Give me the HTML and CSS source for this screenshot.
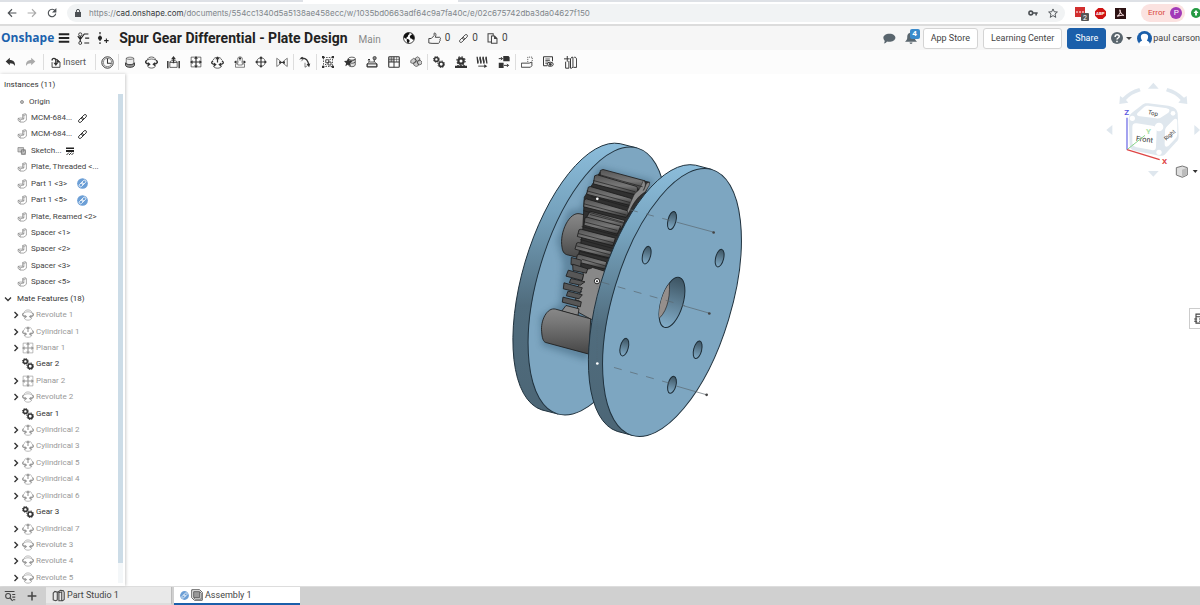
FILE: index.html
```html
<!DOCTYPE html>
<html lang="en">
<head>
<meta charset="utf-8">
<title>Spur Gear Differential - Plate Design</title>
<link rel="stylesheet" href="styles.css">
</head>
<body>
<svg class="defs" aria-hidden="true">
  <symbol id="part" viewBox="0 0 16 16"><path d="M9 2.500l4-1.500 2 1.500v9l-4 3H5l-3.500-3 .5-3 4-.5 3 .5zM9 2.500l2 1.500v5.500L9 8.500M11 4l3.500-1.500M1.500 8.500L5 11l6-1.500M5 11v3.500"/></symbol>
  <symbol id="sketch" viewBox="0 0 16 16"><path fill="#ccc" d="M1.500 2.500h9v7h-9zM7 6h6.500v7.500H7z"/><circle cx="10" cy="9.500" r="3.500" fill="none"/></symbol>
  <symbol id="link" viewBox="0 0 16 16"><g transform="rotate(-45 8 8)" stroke-width="1.500"><rect x="-1" y="5.500" width="10.500" height="5" rx="2.500"/><rect x="6.500" y="5.500" width="10.500" height="5" rx="2.500"/></g></symbol>
  <symbol id="bluelink" viewBox="0 0 16 16"><circle cx="8" cy="8" r="7.800" fill="#6c9fd6" stroke="none"/><g transform="rotate(-45 8 8)" stroke="#fff" stroke-width="1.200"><rect x="2" y="6" width="7" height="4" rx="2"/><rect x="7" y="6" width="7" height="4" rx="2"/></g></symbol>
  <symbol id="fixed" viewBox="0 0 16 16"><path fill="#222" stroke="none" d="M0 1h16v3H0zM0 6h16v4H0z"/><path stroke="#333" stroke-width="2" d="M1 16l5-5M6 16l5-5M11 16l5-5"/></symbol>
  <symbol id="revolute" viewBox="0 0 16 16"><path stroke-width=".9" d="M3 5c0-5 10-5 10 0M3 5c2.500-1.700 7.500-1.700 10 0M3 11.500c0 4.500 10 4.500 10 0"/><path stroke-width="1.700" d="M2.500 5.500C-.5 7 .5 9.500 5 10M13.500 5.500c3 1.500 2 4-2.500 4.500"/><path fill="currentColor" stroke="none" d="M3.500 7.500L7 10l-3.500 3zM12.500 7.500L9 10l3.500 3z"/></symbol>
  <symbol id="cyl" viewBox="0 0 16 16"><path stroke-width=".9" d="M3 5c0-4.500 10-4.500 10 0M3 12c0 4 10 4 10 0"/><path stroke-width="1.500" d="M8 2v6M2.500 6C-.5 8 .5 10 5 10.500M13.500 6c3 2 2 4-2.500 4.500"/><path fill="currentColor" stroke="none" d="M8 .5l2.600 3.500H5.400zM3.500 8L7 10.500 3.500 13.500zM12.500 8L9 10.500l3.500 3z"/></symbol>
  <symbol id="planar" viewBox="0 0 16 16"><path stroke-width=".9" d="M1.500 1.500h13v13h-13z"/><path stroke-width="1.600" d="M8 2v12M2 8h12"/><path fill="currentColor" stroke="none" d="M8 0l2.500 3.500h-5zM8 16l2.500-3.500h-5zM0 8l3.500-2.500v5zM16 8l-3.500-2.500v5z"/></symbol>
  <symbol id="ball" viewBox="0 0 16 16"><circle cx="8" cy="8" r="5.800" stroke-width=".8"/><path stroke-width="1.500" d="M8 2v12M2 8h12"/><path fill="currentColor" stroke="none" d="M8 0l2.300 3.500H5.700zM8 16l2.300-3.500H5.700zM0 8l3.500-2.300v4.600zM16 8l-3.500-2.300v4.600z"/></symbol>
  <symbol id="gears" viewBox="0 0 16 16"><circle cx="4.500" cy="4.500" r="2.600" stroke-width="2"/><circle cx="4.500" cy="4.500" r="4" stroke-width="1.300" stroke-dasharray="1.500 1.640"/><circle cx="11" cy="11" r="3" stroke-width="2.200"/><circle cx="11" cy="11" r="4.500" stroke-width="1.300" stroke-dasharray="1.700 1.830"/></symbol>
  <symbol id="chev" viewBox="0 0 8 8"><path stroke-width="1.400" d="M2.500 1L5.500 4l-3 3"/></symbol>
  <symbol id="down" viewBox="0 0 8 8"><path stroke-width="1.300" d="M1 2.500l3 3 3-3"/></symbol>
  <symbol id="undo" viewBox="0 0 16 16"><path fill="currentColor" stroke="none" d="M7 1v3.500c5 0 8 3 7.500 8.500-1.500-3-4-4-7.500-4V12L1 6.500z"/></symbol>
  <symbol id="redo" viewBox="0 0 16 16"><path fill="currentColor" stroke="none" d="M9 1v3.500c-5 0-8 3-7.500 8.500C3 10 5.500 9 9 9v3l6-5.500z"/></symbol>
  <symbol id="insert" viewBox="0 0 16 16"><path stroke-width="1.300" d="M7 3.500h3.500l4 4V15H3V7.500"/><path fill="currentColor" stroke="none" d="M5 8.500h7L8.500 13zM10 3l5 5h-5z"/><path stroke-width="2" d="M3 5c0-4 5.500-4 5.500 0v4"/></symbol>
  <symbol id="clock" viewBox="0 0 16 16"><circle cx="8" cy="8" r="7" stroke-width="1.200"/><circle cx="8" cy="8" r="5" stroke-width=".7"/><path stroke-width="1.300" d="M8 3v6h4.500"/></symbol>
  <symbol id="fasten" viewBox="0 0 16 16"><path fill="#eee" stroke-width=".8" d="M3 3v7c1 2 9 2 10 0V3c-1-2-9-2-10 0zM3 3c1 2 9 2 10 0"/><path fill="#999" stroke-width="1.200" d="M2 9v3.500c1 3.500 11 3.500 12 0V9c-1 3.500-11 3.500-12 0z"/></symbol>
  <symbol id="slider" viewBox="0 0 16 16"><path stroke-width=".9" d="M3.500 14V7l3-1.500h3l3 1.500v7zM3.500 8h9"/><path stroke-width="1.800" d="M1 6v9M15 6v9M8 3v6"/><path fill="currentColor" stroke="none" d="M8 0l3 4H5z"/></symbol>
  <symbol id="pin" viewBox="0 0 16 16"><path stroke-width=".8" d="M5 7V3c0-2.500 6-2.500 6 0v4M5 10l-3 1v4h12v-4l-3-1M5 10v2h6v-2"/><path stroke-width="1.300" d="M2 8h4M14 8h-4M8 3v3"/><path fill="currentColor" stroke="none" d="M0 8l3-2.500v5zM16 8l-3-2.500v5zM8 1l2 3H6z"/></symbol>
  <symbol id="parallel" viewBox="0 0 16 16"><path stroke-width=".8" d="M1 14V3l4 3v5zM15 14V3l-4 3v5z"/><path stroke-width="1.300" d="M4 8.500h8"/><path fill="currentColor" stroke="none" d="M8 8.500L5 6v5zM8 8.500L11 6v5z"/></symbol>
  <symbol id="tangent" viewBox="0 0 16 16"><path stroke-width=".8" d="M1 5l3-3M3 7l3-3M8 9v6l3-2"/><path stroke-width="1.700" d="M3 3c6-1 9 3 10 9"/><path fill="currentColor" stroke="none" d="M1 3l4-2v4zM10 11l5-1-1.500 5z"/></symbol>
  <symbol id="group" viewBox="0 0 16 16"><path stroke-width="1.100" stroke-dasharray="2 1.500" d="M2 2h12v12H2z"/><path stroke-width="1.200" d="M5 5h4v4H5zM8 8h4v4H8zM10 5l2-1M4 11l2 1"/><path fill="currentColor" stroke="none" d="M0 0h3v3H0zM13 0h3v3h-3zM0 13h3v3H0zM13 13h3v3h-3z"/></symbol>
  <symbol id="star" viewBox="0 0 16 16"><ellipse cx="10.500" cy="3.500" rx="4.500" ry="2"/><path fill="#ddd" d="M6 4v8c1 3 8 3 9 0V4c-1 3-8 3-9 0z"/><path d="M8 9c2 1 5 1 7-1"/><path fill="currentColor" stroke="none" d="M5.500 2.500l1.700 3.900 4.200.3-3.200 2.800 1 4.100-3.700-2.200L1.800 13.600l1-4.100L0 6.700l3.800-.3z"/></symbol>
  <symbol id="mate" viewBox="0 0 16 16"><path d="M1.500 14.500v-4l3-2.500h7l3 2.500v4z" fill="#eee"/><path stroke-width="1.300" d="M1.500 10.500h13v4h-13zM4 8V4M2.500 5.500L4 4l1.500 1.500M11 8V3"/><circle cx="11.500" cy="2.800" r="2.200" fill="#888"/></symbol>
  <symbol id="grid" viewBox="0 0 16 16"><path fill="#bbb" stroke="none" d="M2 2h6v6H2z"/><rect x="1" y="1" width="14" height="14" rx="1" stroke-width="1.500"/><path stroke-width="1.300" d="M8 1v14M1 8h14"/><path stroke-width=".7" d="M4.500 1v7M1 4.500h14M11.500 1v7"/></symbol>
  <symbol id="cluster" viewBox="0 0 16 16"><path stroke-width=".8" fill="#ccc" d="M1 6l4-3 3 2v3L4 10 1 9zM7 3l3-2 3 2v3l-3 1-3-2zM5 9l3-2 3 3v3l-3 1-3-2zM10 7l3-2 3 3-1 3-3 1-2-2z"/></symbol>
  <symbol id="rack" viewBox="0 0 16 16"><circle cx="8" cy="6.500" r="3.500" stroke-width="3"/><circle cx="8" cy="6.500" r="5.500" stroke-width="1.600" stroke-dasharray="2 2.320"/><path fill="currentColor" stroke="none" d="M0 16v-3h3v-1h2v1h2v-1h2v1h2v-1h2v1h3v3z"/></symbol>
  <symbol id="screw" viewBox="0 0 16 16"><path stroke-width="1.700" d="M1.500 1l1 9M5.500 1l1 9M9.500 1l1 9M13.500 1l1 9"/><path stroke-width=".8" d="M2.500 10l3-9M6.500 10l3-9M10.500 10l3-9"/><path stroke-width="1.200" d="M3 13.500h9"/><path fill="currentColor" stroke="none" d="M11 11l4 2.500-4 2.500z"/></symbol>
  <symbol id="linear" viewBox="0 0 16 16"><path fill="currentColor" stroke="none" d="M7 0h7l1.500 1.500V7H7zM1 9h6.500v7H1z"/><path stroke-width="1.300" d="M1 3.500h5M8 12.500h6M4 1.500l2 2-2 2M12 10.500l2 2-2 2"/></symbol>
  <symbol id="measure" viewBox="0 0 16 16"><path stroke-width="1" stroke-dasharray="1.500 1.200" d="M9 8V1.500h6V8"/><path stroke-width="1.200" d="M.5 9.500H11l3.500-1.500v5l-2 2H.5z"/></symbol>
  <symbol id="bom" viewBox="0 0 16 16"><path stroke-width="1.300" d="M7 13H2V1h12v6"/><path stroke-width="1" d="M4.500 4h6M4.500 6h6M4.500 8h4M4.500 10h2"/><ellipse cx="11" cy="11" rx="4" ry="2.800" stroke-width="1.300"/><circle cx="11" cy="11" r="1.500" fill="currentColor"/></symbol>
  <symbol id="explode" viewBox="0 0 16 16"><path stroke-width="1.200" d="M2 7v8h4V6M8 3.500l1.500-2h1.500v12L9.500 15H8zM12.500 1.500H14l1.500 2V14h-4M4 0v7M0 3.500h7"/></symbol>
  <symbol id="tree" viewBox="0 0 16 16"><circle cx="4" cy="3" r="2"/><circle cx="4" cy="13.500" r="1.800"/><path stroke-width="1.400" d="M4 5v7M4.500 8.500L9 2.500h5M10 7.500h5M9 13.500h6M1 5l3 4"/></symbol>
  <symbol id="version" viewBox="0 0 16 16"><path stroke-width="1.600" stroke-dasharray="3 1.500" d="M4 0v16"/><circle cx="4" cy="8" r="2.800" fill="currentColor" stroke="none"/><path stroke-width="1.400" d="M12.500 8.500v6M9.500 11.500h6"/></symbol>
  <symbol id="globe" viewBox="0 0 16 16"><circle cx="8" cy="8" r="7.300" fill="#fff" stroke-width="1"/><path fill="currentColor" stroke="none" d="M1.500 4C3 1.500 5.500.8 8 1l1 1.500L7 4 6.500 6 4.500 7.500 5 9 3 8.500 1 7zM10.500 1.500c3 1 5 4 4.500 7.500l-1.500 2L12 9l-2-.5L9 6l1.500-2L12 4zM5 9l3 1 1 2-2 3-1.500-1L5 11.500z"/></symbol>
  <symbol id="thumb" viewBox="0 0 16 16"><path stroke-width="1.200" d="M1 8h3l3.500-3.500V1.500c2-1 3 1.500 1.500 5h5.500c1.500 1 1 2 .3 2.500.5 1.200.2 2-.6 2.500 0 1-.3 2-1.200 2.500H5L1 13.500z"/></symbol>
  <symbol id="docs" viewBox="0 0 16 16"><path stroke-width="1.500" d="M6 13H1.500V1H9v3M6.500 4.500h4.500L14.500 8v7h-8zM11 4.500V8h3.500"/></symbol>
  <symbol id="studio" viewBox="0 0 16 16"><path stroke-width="1.300" d="M1.500 5l2-2 3 1v9.500l-2 1-3-1zM8.500 3l2-1.500 3.500.5 1 2v9l-2 1.500H8.500zM8.500 4.500l3.500-1v11M6.500 4l2-1"/></symbol>
  <symbol id="assembly" viewBox="0 0 16 16"><path stroke-width="1.200" d="M1 1h10.500L15 4.500V15H4.500L1 11.500z"/><path fill="#999" stroke-width="1" d="M3.500 3.500h8v8h-8z"/><path d="M12 4l1.500 1.500v8H6L4 12"/></symbol>
  <symbol id="tabsearch" viewBox="0 0 16 16"><path stroke-width="1.400" d="M1 2h13M11 6h4M11 9.500h4M12 13h3"/><circle cx="5.500" cy="8" r="3.300" stroke-width="1.400"/><path stroke-width="1.600" d="M8 10.500l3.500 4"/></symbol>
</svg>

<div class="browser">
  <div class="strip"><span class="strip-left"></span><span class="strip-right"></span></div>
  <div class="navbar">
    <button class="nav" aria-label="Back"><svg class="i10" viewBox="0 0 16 16"><path stroke-width="1.800" d="M15 8H2M8 2L2 8l6 6"/></svg></button>
    <button class="nav faint" aria-label="Forward"><svg class="i10" viewBox="0 0 16 16"><path stroke-width="1.800" d="M1 8h13M8 2l6 6-6 6"/></svg></button>
    <button class="nav" aria-label="Reload"><svg class="i10" viewBox="0 0 16 16"><path stroke-width="1.800" d="M13 4.500A6 6 0 1 0 14 9"/><path fill="currentColor" stroke="none" d="M15 0v7H8z"/></svg></button>
    <div class="address">
      <svg class="i8" viewBox="0 0 16 16"><path fill="currentColor" stroke="none" d="M2 6h12v10H2z"/><path stroke-width="2" d="M4.800 6V4a3.200 3.200 0 0 1 6.400 0v2"/></svg>
      <a class="url" href="#">https://<b>cad.onshape.com</b>/documents/554cc1340d5a5138ae458ecc/w/1035bd0663adf64c9a7fa40c/e/02c675742dba3da04627f150</a>
      <svg class="i10 key" viewBox="0 0 16 16"><circle cx="4.500" cy="8" r="3" stroke-width="2.500"/><path stroke-width="2.500" d="M8 8h7.500M13 8v4"/></svg>
      <svg class="i10" viewBox="0 0 16 16"><path stroke-width="1.500" d="M8 1.500l2 4.500 5 .4-3.800 3.200L12.400 15 8 12.100 3.600 15l1.200-5.400L1 6.400 6 6z"/></svg>
    </div>
    <div class="exts">
      <svg class="ext-wide" viewBox="0 0 14 14"><path fill="#d22f2f" stroke="none" d="M0 0h10v10H0z"/><path stroke="#fff" stroke-width="1.200" stroke-dasharray="2 1" d="M1 5h8"/><rect x="6" y="6" width="8" height="8" rx="1" fill="#555" stroke="none"/><text class="ext-num" x="8" y="13">2</text></svg>
      <svg class="i11" viewBox="0 0 20 20"><path fill="#cf1212" stroke="none" d="M6 0h8l6 6v8l-6 6H6l-6-6V6z"/><text class="ext-abp" x="2" y="13">ABP</text></svg>
      <svg class="i11" viewBox="0 0 16 16"><path fill="#2c1213" stroke="none" d="M0 0h16v16H0z"/><path stroke="#f2d8d8" stroke-width="1.500" d="M3 12c4-2 6-8 4.500-9S7 8 13 11c-2-1-6 0-10 1z"/></svg>
      <span class="divider"></span>
      <button class="profile">Error <span class="initial">P</span></button>
      <svg class="i10" viewBox="0 0 16 16"><circle cx="8" cy="8" r="8" fill="#259a43" stroke="none"/><path fill="#fff" stroke="none" d="M8 3l4 5H9.500v4h-3V8H4z"/></svg>
    </div>
  </div>
</div>

<header class="header">
  <a class="logo" href="#">Onshape</a>
  <button aria-label="Menu"><svg class="i12" viewBox="0 0 16 16"><path stroke-width="2.400" d="M1 3h14M1 8h14M1 13h14"/></svg></button>
  <button aria-label="Versions"><svg class="i13"><use href="#tree"/></svg></button>
  <button aria-label="Create version"><svg class="i12"><use href="#version"/></svg></button>
  <h1>Spur Gear Differential - Plate Design</h1>
  <span class="branch">Main</span>
  <svg class="i12 globe"><use href="#globe"/></svg>
  <button class="count"><svg class="i13"><use href="#thumb"/></svg>0</button>
  <button class="count"><svg class="i9"><use href="#link"/></svg>0</button>
  <button class="count"><svg class="i11"><use href="#docs"/></svg>0</button>
  <div class="account">
    <button aria-label="Comments"><svg class="i13 slate" viewBox="0 0 16 16"><path fill="currentColor" stroke="none" d="M8 2c9 0 10 9 1 10-1 0-3 0-4-.4C4 13 2.500 14 1 14c1-1 1.200-2 1-3.300C-1.500 7 1 2 8 2z"/></svg></button>
    <button class="bell" aria-label="Notifications"><svg class="i12 slate" viewBox="0 0 16 16"><path fill="currentColor" stroke="none" d="M8 1c4 0 5 3 5 6s1 4 3 6H0c2-2 3-3 3-6s1-6 5-6zM6 14h4c0 2.500-4 2.500-4 0z"/></svg><span class="badge">4</span></button>
    <button class="btn">App Store</button>
    <button class="btn">Learning Center</button>
    <button class="btn primary">Share</button>
    <button class="help" aria-label="Help"><svg class="i12 slate" viewBox="0 0 16 16"><circle cx="8" cy="8" r="8" fill="currentColor" stroke="none"/><path stroke="#fff" stroke-width="2" d="M5.500 6.500c0-4 5.500-3.500 5.500-.5 0 2-3 2-3 4M8 11.500v2"/></svg><span class="caret"></span></button>
    <button class="user"><svg class="i15" viewBox="0 0 16 16"><circle cx="8" cy="8" r="8" fill="#1b5faa" stroke="none"/><path fill="#fff" stroke="none" d="M8 3c6 0 3.500 6 2.500 7.500 2 .7 3.500 1.500 3.500 5.500H2c0-4 1.500-4.800 3.500-5.500C4.500 9 2 3 8 3z"/></svg>paul carson</button>
  </div>
</header>

<div class="toolbar">
  <div class="group g-undo"><button aria-label="Undo"><svg class="i11"><use href="#undo"/></svg></button><button class="faint" aria-label="Redo"><svg class="i11"><use href="#redo"/></svg></button></div>
  <div class="group g-insert"><button class="insert"><svg class="i11"><use href="#insert"/></svg>Insert</button></div>
  <div class="group g-one"><button aria-label="History"><svg class="i13"><use href="#clock"/></svg></button></div>
  <div class="group g-mates">
    <button aria-label="Fastened"><svg class="i12"><use href="#fasten"/></svg></button><button aria-label="Revolute"><svg class="i13"><use href="#revolute"/></svg></button><button aria-label="Slider"><svg class="i13"><use href="#slider"/></svg></button><button aria-label="Planar"><svg class="i12"><use href="#planar"/></svg></button><button aria-label="Cylindrical"><svg class="i13"><use href="#cyl"/></svg></button><button aria-label="Pin slot"><svg class="i12"><use href="#pin"/></svg></button><button aria-label="Ball"><svg class="i12"><use href="#ball"/></svg></button><button aria-label="Parallel"><svg class="i12"><use href="#parallel"/></svg></button>
  </div>
  <div class="group g-one"><button aria-label="Tangent"><svg class="i12"><use href="#tangent"/></svg></button></div>
  <div class="group g-five">
    <button aria-label="Group"><svg class="i12"><use href="#group"/></svg></button><button aria-label="Favorites"><svg class="i12"><use href="#star"/></svg></button><button aria-label="Mate connector"><svg class="i12"><use href="#mate"/></svg></button><button aria-label="Pattern"><svg class="i12"><use href="#grid"/></svg></button><button aria-label="Replicate"><svg class="i12"><use href="#cluster"/></svg></button>
  </div>
  <div class="group g-four">
    <button aria-label="Gear"><svg class="i12"><use href="#gears"/></svg></button><button aria-label="Rack and pinion"><svg class="i12"><use href="#rack"/></svg></button><button aria-label="Screw"><svg class="i12"><use href="#screw"/></svg></button><button aria-label="Linear"><svg class="i12"><use href="#linear"/></svg></button>
  </div>
  <div class="group g-three">
    <button aria-label="Measure"><svg class="i12"><use href="#measure"/></svg></button><button aria-label="Bill of materials"><svg class="i12"><use href="#bom"/></svg></button><button aria-label="Exploded view"><svg class="i13"><use href="#explode"/></svg></button>
  </div>
</div>

<main class="work">
  <aside class="sidebar">
    <ul class="list">
      <li class="head">Instances (11)</li>
      <li class="inst"><span class="origin"></span>Origin</li>
      <li class="inst"><svg class="i10"><use href="#part"/></svg>MCM-684...<svg class="i9 dark"><use href="#link"/></svg></li>
      <li class="inst"><svg class="i10"><use href="#part"/></svg>MCM-684...<svg class="i9 dark"><use href="#link"/></svg></li>
      <li class="inst"><svg class="i10"><use href="#sketch"/></svg>Sketch...<svg class="i8"><use href="#fixed"/></svg></li>
      <li class="inst"><svg class="i10"><use href="#part"/></svg>Plate, Threaded &lt;...</li>
      <li class="inst far"><svg class="i10"><use href="#part"/></svg>Part 1 &lt;3&gt;<svg class="i11"><use href="#bluelink"/></svg></li>
      <li class="inst far"><svg class="i10"><use href="#part"/></svg>Part 1 &lt;5&gt;<svg class="i11"><use href="#bluelink"/></svg></li>
      <li class="inst"><svg class="i10"><use href="#part"/></svg>Plate, Reamed &lt;2&gt;</li>
      <li class="inst"><svg class="i10"><use href="#part"/></svg>Spacer &lt;1&gt;</li>
      <li class="inst"><svg class="i10"><use href="#part"/></svg>Spacer &lt;2&gt;</li>
      <li class="inst"><svg class="i10"><use href="#part"/></svg>Spacer &lt;3&gt;</li>
      <li class="inst"><svg class="i10"><use href="#part"/></svg>Spacer &lt;5&gt;</li>
      <li class="head"><button aria-label="Collapse"><svg class="i8"><use href="#down"/></svg></button>Mate Features (18)</li>
      <li class="mate"><button aria-label="Expand"><svg class="i8"><use href="#chev"/></svg></button><svg class="i12"><use href="#revolute"/></svg>Revolute 1</li>
      <li class="mate"><button aria-label="Expand"><svg class="i8"><use href="#chev"/></svg></button><svg class="i12"><use href="#cyl"/></svg>Cylindrical 1</li>
      <li class="mate"><button aria-label="Expand"><svg class="i8"><use href="#chev"/></svg></button><svg class="i12"><use href="#planar"/></svg>Planar 1</li>
      <li class="mate gear"><svg class="i12"><use href="#gears"/></svg>Gear 2</li>
      <li class="mate"><button aria-label="Expand"><svg class="i8"><use href="#chev"/></svg></button><svg class="i12"><use href="#planar"/></svg>Planar 2</li>
      <li class="mate"><button aria-label="Expand"><svg class="i8"><use href="#chev"/></svg></button><svg class="i12"><use href="#revolute"/></svg>Revolute 2</li>
      <li class="mate gear"><svg class="i12"><use href="#gears"/></svg>Gear 1</li>
      <li class="mate"><button aria-label="Expand"><svg class="i8"><use href="#chev"/></svg></button><svg class="i12"><use href="#cyl"/></svg>Cylindrical 2</li>
      <li class="mate"><button aria-label="Expand"><svg class="i8"><use href="#chev"/></svg></button><svg class="i12"><use href="#cyl"/></svg>Cylindrical 3</li>
      <li class="mate"><button aria-label="Expand"><svg class="i8"><use href="#chev"/></svg></button><svg class="i12"><use href="#cyl"/></svg>Cylindrical 5</li>
      <li class="mate"><button aria-label="Expand"><svg class="i8"><use href="#chev"/></svg></button><svg class="i12"><use href="#cyl"/></svg>Cylindrical 4</li>
      <li class="mate"><button aria-label="Expand"><svg class="i8"><use href="#chev"/></svg></button><svg class="i12"><use href="#cyl"/></svg>Cylindrical 6</li>
      <li class="mate gear"><svg class="i12"><use href="#gears"/></svg>Gear 3</li>
      <li class="mate"><button aria-label="Expand"><svg class="i8"><use href="#chev"/></svg></button><svg class="i12"><use href="#cyl"/></svg>Cylindrical 7</li>
      <li class="mate"><button aria-label="Expand"><svg class="i8"><use href="#chev"/></svg></button><svg class="i12"><use href="#revolute"/></svg>Revolute 3</li>
      <li class="mate"><button aria-label="Expand"><svg class="i8"><use href="#chev"/></svg></button><svg class="i12"><use href="#revolute"/></svg>Revolute 4</li>
      <li class="mate"><button aria-label="Expand"><svg class="i8"><use href="#chev"/></svg></button><svg class="i12"><use href="#revolute"/></svg>Revolute 5</li>
    </ul>
    <div class="scroll"><span class="thumb"></span></div>
  </aside>

  <section class="canvas">
    <svg class="model" viewBox="125 74 1075 511" role="img" aria-label="Gear differential between two plates">
      <defs>
        <linearGradient id="rim" x1="0" y1="0" x2="0" y2="1"><stop offset="0" stop-color="#8cbddb"/><stop offset=".25" stop-color="#76a3be"/><stop offset=".6" stop-color="#506c7d"/><stop offset="1" stop-color="#4c6676"/></linearGradient>
        <linearGradient id="post" x1="0" y1="0" x2="0" y2="1"><stop offset="0" stop-color="#888"/><stop offset=".3" stop-color="#777"/><stop offset="1" stop-color="#464646"/></linearGradient>
        <linearGradient id="tooth" x1="0" y1="0" x2="0" y2="1"><stop offset="0" stop-color="#555"/><stop offset=".55" stop-color="#777"/><stop offset="1" stop-color="#333"/></linearGradient>
        <linearGradient id="bore" x1="0" y1="0" x2="0" y2="1"><stop offset="0" stop-color="#3c5361"/><stop offset="1" stop-color="#83aeca"/></linearGradient>
        <filter id="soft" x="-30%" y="-30%" width="160%" height="160%"><feGaussianBlur stdDeviation="10"/></filter>
        <clipPath id="boreclip"><ellipse cx="516" cy="516" rx="33" ry="78" transform="rotate(16.800 516 516)"/></clipPath>
        <clipPath id="faceclip"><ellipse cx="597.500" cy="280.500" rx="59.100" ry="138.800" transform="rotate(16.800 597.500 280.500)"/></clipPath>
      </defs>
      <g class="edge">
        <path fill="url(#rim)" d="M636.700 147.400L620.200 143.200A59.100 138.800 16.800 0 0 541.800 409.400L558.300 413.600z"/>
        <ellipse cx="597.500" cy="280.500" rx="59.100" ry="138.800" transform="rotate(16.800 597.500 280.500)" fill="#7da6c1"/>
      </g>
      <g clip-path="url(#faceclip)"><g transform="translate(500 130) scale(.3333)"><path filter="url(#soft)" fill="#31556c" opacity=".4" stroke="none" d="M295 110L460 150 330 500 260 690 125 645 120 560 180 520 190 400 170 330 205 240 240 235z"/></g></g>
      <g class="part-edge" transform="translate(500 130) scale(.3333)">
        <path fill="url(#post)" d="M275 258l-35-8c-32-8-62 56-54 100 2 18 10 22 20 24l50 13z"/>
        <path fill="#303030" d="M300 125l148 30-15 40-65 110-40 90-10 50-65-25-20-30 15-85 5-105z"/>
        <g fill="url(#tooth)">
          <path d="M301 120l8-3 126 34-6 29-129-36z"/>
          <path d="M284 136l8-3 118 35c5 8 2 18-4 25l-126-33z"/>
          <path d="M265 170l6-2 123 36c5 8 2 16-4 21l-130-34z"/>
          <path d="M253 208l6-3 124 36c5 6 0 15-5 20l-127-32z"/>
          <path d="M270 242l105 28-11 27-108-29z"/>
          <path d="M255 262l6-2 101 27-10 24-100-27z"/>
          <path d="M237 298l6-2 103 27-7 23-107-28z"/>
          <path d="M230 338l5-2 100 27-5 20-105-27z"/>
          <path d="M232 373l5-2 83 23-5 22-87-23z"/>
        </g>
        <path fill="#888" stroke-width="1.500" d="M430 150c8 4 8 18 0 30l10-22 9-3-1 9-12 20c-22 12-38 36-50 65l-4-8c8-20 10-26 14-34 4-10 8-19 13-22 10-5 16-24 21-35z"/>
        <path stroke-width="2" d="M300 133l128 36M280 150l126 34M260 181l130 35M252 220l128 34M270 252l100 26M252 274l100 26M235 309l106 28M229 346l102 27M245 386l70 20M272 198l115 32M250 240l122 36M245 288l108 28M240 327l100 27M240 363l92 23"/>
        <path fill="#888" d="M250 420c10-6 20-3 28-9l39 12 3 120-46 24-45-25 10-30-14-5 20-24-15-9 18-28z"/>
        <g fill="#575757">
          <path d="M214 381l30 8-3 24-28-11z"/>
          <path d="M218 401l45 14-4 13-40-8z"/>
          <path d="M205 419l46 13-5 18-48-13z"/>
          <path d="M213 444l42 10-14 10-33-7z"/>
          <path d="M192 457l55 15-7 15-50-12z"/>
          <path d="M204 482l43 11-10 12-38-9z"/>
          <path d="M189 500l55 14-3 15-54-14z"/>
          <path d="M198 525l39 10-3 20-49-13z" fill="#888"/>
        </g>
        <path fill="url(#post)" d="M272 565l-105-29c-26-7-46 35-42 68 1 18 5 30 12 32l130 35z"/>
      </g>
      <g class="edge">
        <path fill="url(#rim)" d="M711.700 168.900L695.700 164.700A59.100 138.800 16.800 0 0 617.300 430.900L633.300 435.100z"/>
        <ellipse cx="672" cy="302" rx="59.100" ry="138.800" transform="rotate(16.800 672 302)" fill="#7da6c1"/>
      </g>
      <g transform="translate(500 130) scale(.3333)">
        <g class="holes">
          <ellipse cx="516" cy="270" rx="12" ry="28" transform="rotate(14 516 270)"/>
          <ellipse cx="440" cy="374" rx="12" ry="27" transform="rotate(14 440 374)"/>
          <ellipse cx="659" cy="383" rx="12" ry="27" transform="rotate(14 659 383)"/>
          <ellipse cx="373" cy="650" rx="12" ry="27" transform="rotate(14 373 650)"/>
          <ellipse cx="593" cy="658" rx="12" ry="27" transform="rotate(14 593 658)"/>
          <ellipse cx="516" cy="763" rx="12" ry="26" transform="rotate(14 516 763)"/>
          <ellipse cx="516" cy="516" rx="33" ry="78" transform="rotate(16.800 516 516)"/>
        </g>
        <path clip-path="url(#boreclip)" fill="#958f8c" stroke="#222" stroke-width="2" d="M470 440h36c8 50-3 100-27 122l-20 10z"/>
        <g class="axis">
          <path stroke-dasharray="24 26" d="M390 238l140 37M305 455l250 71M342 711l188 53"/>
          <path d="M530 275l111 30M551 526l77 22M530 767l90 26"/>
          <path stroke-dasharray="2 5" stroke-width="1" d="M292 467v220"/>
          <circle cx="641" cy="306" r="4"/><circle cx="628" cy="549" r="4"/><circle cx="620" cy="793" r="4"/>
        </g>
        <circle cx="292" cy="205" r="4" fill="#fff" stroke="none"/><circle cx="292" cy="699" r="4" fill="#fff" stroke="none"/>
        <circle cx="291" cy="452" r="8" fill="#fff" stroke="#222" stroke-width="3"/><circle cx="291" cy="452" r="3" fill="#222" stroke="none"/>
      </g>
    </svg>
    <svg class="cube" viewBox="0 15 360 345" role="img" aria-label="View orientation">
      <g fill="#dfe7ee" stroke="none">
        <path d="M220 38l16 18h-32zM220 320l16-17h-32zM79 180l18-15v30zM360 180l-17-15v30z"/>
        <path d="M178 54l4 10c-20 6-34 14-44 26l7 8-27 4 2-24 8 5c14-14 30-24 50-29zM262 54l-4 10c20 6 34 14 44 26l-7 8 27 4-2-24-8 5c-14-14-30-24-50-29z"/>
        <path d="M205 100l60 7c15 3 25 8 28 22l3 70c0 10-3 14-8 18l-32 35c-6 6-12 6-18 5l-66-13c-14-3-22-6-23-18l-3-75c0-12 4-18 12-24l28-22c6-5 10-6 19-5z"/>
      </g>
      <g fill="#fff" stroke="none">
        <path d="M204 107l52 7c12 2 16 6 9 14l-21 14c-5 4-10 4-16 3l-48-6c-10-2-12-6-4-13l14-13c5-5 8-6 14-6z"/>
        <path d="M170 160l48 7c8 1 12 6 12 14l-2 49c0 9-5 12-13 10l-45-8c-9-2-13-7-13-15v-45c0-9 4-13 13-12z"/>
        <path d="M262 168l18-18c7-6 12-4 12 5v36c0 7-2 11-7 16l-17 18c-8 8-14 6-14-4l1-37c0-7 2-11 7-16z"/>
        <circle cx="237" cy="171" r="13"/><circle cx="157" cy="145" r="8"/><circle cx="279" cy="130" r="7"/><circle cx="237" cy="247" r="8"/>
      </g>
      <text class="cube-text small" transform="rotate(12 203 132)" x="203" y="132">Top</text>
      <text class="cube-text" transform="rotate(7 167 212)" x="167" y="212">Front</text>
      <text class="cube-text mid" transform="rotate(-42 260 211)" x="258" y="211">Right</text>
      <path stroke="#7674e8" stroke-width="4" d="M141 143v96"/>
      <path stroke="#8bd68b" stroke-width="3" d="M141 239l54-43"/>
      <path stroke="#de4545" stroke-width="4" d="M141 239l98 30"/>
      <text class="axis-text z" x="133" y="136">Z</text><text class="axis-text y" x="198" y="191">Y</text><text class="axis-text x" x="246" y="282">X</text>
      <path fill="#ddd" stroke="#777" stroke-width="3" d="M289 293l18-5 15 5v22l-15 7-18-7z"/><path fill="#bbb" stroke="none" d="M306 299l14-5v20l-14 6z"/>
      <path fill="#333" stroke="none" d="M338 300h15l-7 9z"/>
    </svg>
    <button class="flyout" aria-label="Configuration panel"><svg class="i12" viewBox="0 0 16 16"><path stroke-width="1.500" d="M4 1.500h12v12H4zM4 5h11M1.500 8h4M1.500 11h4M8 8h7M8 11h7"/></svg></button>
  </section>
</main>

<footer class="tabs">
  <button class="tab-tool" aria-label="Search tabs"><svg class="i12"><use href="#tabsearch"/></svg></button>
  <button class="tab-tool" aria-label="Add tab"><svg class="i10" viewBox="0 0 16 16"><path stroke-width="2.400" d="M8 1v14M1 8h14"/></svg></button>
  <button class="tab"><svg class="i13"><use href="#studio"/></svg>Part Studio 1</button>
  <button class="tab active"><svg class="i9"><use href="#bluelink"/></svg><svg class="i12"><use href="#assembly"/></svg>Assembly 1</button>
</footer>
</body>
</html>
```
FILE: styles.css
```css
* { box-sizing: border-box; }
body {
  margin: 0;
  min-height: 100vh;
  display: flex;
  flex-direction: column;
  background: #fff;
  color: #444;
  font: 9px/12px Roboto, "Liberation Sans", sans-serif;
  overflow: hidden;
}
button {
  display: inline-flex;
  align-items: center;
  justify-content: center;
  padding: 0;
  border: 0;
  background: none;
  color: inherit;
  font: inherit;
  white-space: nowrap;
}
a { text-decoration: none; }
svg { flex: none; fill: none; stroke: currentColor; }
.defs { position: absolute; width: 0; height: 0; }
.i8 { width: 8px; height: 8px; }
.i9 { width: 9px; height: 9px; }
.i10 { width: 10px; height: 10px; }
.i11 { width: 11px; height: 11px; }
.i12 { width: 12px; height: 12px; }
.i13 { width: 13px; height: 13px; }
.i15 { width: 15px; height: 15px; }
.faint { color: #aaa; }
.slate { color: #59656d; }

/* browser chrome */
.browser { border-bottom: 2px solid #dcdcdc; }
.strip { display: flex; justify-content: space-between; height: 2px; }
.strip-left { width: 303px; background: #dee1e6; }
.strip-right { width: 742px; background: #dee1e6; }
.navbar { display: flex; align-items: center; height: 22px; padding-left: 7px; color: #4c5054; }
.nav { width: 10px; margin-right: 10px; }
.nav.faint { color: #aaa; }
.address {
  display: flex;
  flex: 1;
  align-items: center;
  gap: 7px;
  height: 18px;
  padding: 0 7px;
  border-radius: 9px;
  background: #f1f3f4;
}
.url {
  flex: 1;
  color: #80868b;
  font: 8px/12px Inter, "Open Sans", sans-serif;
  white-space: nowrap;
}
.url b { color: #36393c; font-weight: 400; }
.key { margin-right: 3px; }
.exts { display: flex; align-items: center; gap: 9px; padding-left: 10px; width: 135px; }
.ext-wide { width: 14px; height: 14px; margin: 2px -3px 0 0; }
.ext-num { fill: #fff; stroke: none; font-size: 7px; }
.ext-abp { fill: #fff; stroke: none; font-size: 8px; font-weight: 700; }
.divider { width: 1px; height: 10px; background: #ddd; }
.profile {
  flex: none;
  gap: 5px;
  height: 18px;
  margin: 0 -3px;
  padding: 0 3px 0 7px;
  border-radius: 9px;
  background: #fbe2e0;
  color: #d9463b;
  font: 8px/12px Roboto, sans-serif;
}
.initial { width: 12px; border-radius: 6px; background: #a23ab8; color: #fff; text-align: center; }

/* document header */
.header {
  display: flex;
  align-items: center;
  gap: 7px;
  height: 24px;
  padding-left: 1px;
  background: #f6f6f6;
  white-space: nowrap;
}
.header > button { color: #222; }
.logo { margin-right: -3px; color: #1b62ad; font: 700 12px/16px "Open Sans", sans-serif; }
h1 { margin: 0 4px 0 3px; color: #222; font: 700 14px/18px Roboto, sans-serif; }
.branch { color: #888; font-size: 10px; padding-top: 3px; }
.globe { margin: 0 6px 0 15px; color: #111; }
.header .count { gap: 4px; margin-right: 2px; color: #444; font-size: 10px; }
.account { display: flex; align-items: center; gap: 5px; margin-left: auto; flex: none; }
.bell { position: relative; margin: 0 1px 0 4px; }
.badge {
  position: absolute;
  top: -3px;
  left: 5px;
  width: 10px;
  height: 10px;
  border-radius: 2px;
  background: #3b8bcb;
  color: #fff;
  font: 700 8px/10px Roboto, sans-serif;
}
.btn {
  height: 21px;
  padding: 0 7px;
  border: 1px solid #d4d4d4;
  border-radius: 3px;
  background: #fff;
}
.btn.primary { border-color: #1b5faa; background: #1b5faa; color: #fff; }
.help { gap: 3px; }
.caret { border: 3px solid transparent; border-top-color: #444; border-bottom: 0; }
.user { gap: 1px; }

/* feature toolbar */
.toolbar { display: flex; align-items: center; height: 24px; background: #fcfcfc; color: #333; }
.group {
  display: flex;
  flex: none;
  align-items: center;
  justify-content: space-around;
  height: 16px;
  border-left: 1px solid #ddd;
}
.g-undo { width: 43px; padding-right: 2px; border: 0; }
.g-insert { width: 52px; padding-right: 3px; }
.g-one { width: 23px; }
.g-mates { width: 175px; }
.g-five { width: 111px; }
.g-four { width: 88px; }
.g-three { width: 67px; }
.insert { gap: 2px; color: #555; }
.insert svg { color: #333; }

/* work area */
.work { display: flex; flex: 1; }
.sidebar {
  display: flex;
  flex: none;
  width: 125px;
  background: #fff;
  box-shadow: 1px 0 3px #ccc;
  z-index: 1;
}
.list {
  display: flex;
  flex: 1;
  flex-direction: column;
  margin: 0;
  padding: 3px 0 0;
  list-style: none;
  font-size: 8px;
}
.list li { display: flex; flex: 1; align-items: center; min-height: 12px; white-space: nowrap; }
.list .head { gap: 5px; padding-left: 4px; color: #333; }
.inst { gap: 4px; padding-left: 17px; }
.inst svg { color: #777; }
.inst svg.dark { margin-left: 2px; color: #222; }
.inst.far svg + svg { margin-left: 6px; }
.origin { width: 4px; height: 4px; margin: 0 1px 0 3px; border: 1px solid #999; border-radius: 2px; background: #bbb; }
.mate { gap: 2px; padding-left: 12px; color: #999; }
.mate button { color: #333; }
.mate.gear { padding-left: 22px; color: #333; }
.scroll { display: flex; width: 5px; margin: 20px 2px 3px 0; background: #f4f7f9; }
.thumb { flex: 1; margin-bottom: 20px; background: #ccdce7; }
.canvas { position: relative; display: flex; flex: 1; min-width: 0; }
.model { flex: 1; min-width: 0; width: 100%; }
.edge { stroke: #20323e; stroke-width: 1; }
.part-edge { stroke: #1c1c1c; stroke-width: 2.5; }
.holes { fill: url(#bore); stroke: #1d2c36; stroke-width: 3; }
.axis { stroke: #59656d; stroke-width: 2; }
.axis circle { fill: #444; stroke: none; }
.cube { position: absolute; top: 1px; right: 0; width: 120px; height: 115px; }
.cube-text { fill: #333; stroke: none; font-size: 22px; }
.cube-text.mid { font-size: 17px; }
.cube-text.small { font-size: 18px; }
.axis-text { stroke: none; font-size: 24px; font-weight: 700; }
.z { fill: #5a58e0; }
.y { fill: #a8dfa8; }
.x { fill: #de4545; }
.flyout {
  position: absolute;
  top: 234px;
  right: 0;
  width: 11px;
  height: 21px;
  justify-content: flex-start;
  padding-left: 3px;
  overflow: hidden;
  border: 1px solid #ccc;
  border-right: 0;
  background: #fff;
}

/* document tabs */
.tabs { display: flex; height: 19px; background: #d0d0d0; border-top: 1px solid #ddd; }
.tab-tool { width: 20px; margin-right: 2px; }
.tab {
  justify-content: flex-start;
  gap: 2px;
  width: 126px;
  margin-left: 2px;
  padding-left: 6px;
  border-right: 1px solid #bbb;
  border-bottom: 2px solid #ddd;
  background: #e9e9e9;
}
.tab.active { border-right: 0; border-bottom-color: #1b5faa; background: #fff; }
```
